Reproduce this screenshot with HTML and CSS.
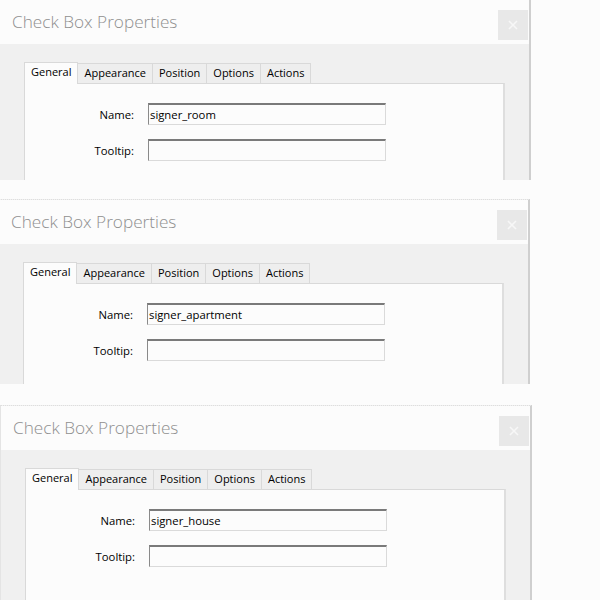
FILE: index.html
```html
<!DOCTYPE html>
<html lang="en">
<head>
<meta charset="utf-8">
<title>Check Box Properties</title>
<link rel="stylesheet" href="styles.css">
</head>
<body>
<div class="shot shot-1">
  <section class="dialog">
    <header class="titlebar">
      <h1 class="title">Check Box Properties</h1>
      <button class="close" aria-label="Close"><svg width="10" height="10" viewBox="0 0 10 10"><path d="M1 1L9 9M9 1L1 9" stroke="#f7f7f7" stroke-width="1.6"/></svg></button>
    </header>
    <div class="dlg-body">
      <nav class="tabs">
        <span class="tab active">General</span><span class="tab">Appearance</span><span class="tab">Position</span><span class="tab">Options</span><span class="tab">Actions</span>
      </nav>
      <div class="tab-panel">
        <div class="form">
          <label class="lbl">Name:</label><div class="field">signer_room</div>
          <label class="lbl">Tooltip:</label><div class="field"></div>
        </div>
      </div>
    </div>
  </section>
</div>
<div class="shot shot-2">
  <section class="dialog">
    <header class="titlebar">
      <h1 class="title">Check Box Properties</h1>
      <button class="close" aria-label="Close"><svg width="10" height="10" viewBox="0 0 10 10"><path d="M1 1L9 9M9 1L1 9" stroke="#f7f7f7" stroke-width="1.6"/></svg></button>
    </header>
    <div class="dlg-body">
      <nav class="tabs">
        <span class="tab active">General</span><span class="tab">Appearance</span><span class="tab">Position</span><span class="tab">Options</span><span class="tab">Actions</span>
      </nav>
      <div class="tab-panel">
        <div class="form">
          <label class="lbl">Name:</label><div class="field">signer_apartment</div>
          <label class="lbl">Tooltip:</label><div class="field"></div>
        </div>
      </div>
    </div>
  </section>
</div>
<div class="shot shot-3">
  <section class="dialog">
    <header class="titlebar">
      <h1 class="title">Check Box Properties</h1>
      <button class="close" aria-label="Close"><svg width="10" height="10" viewBox="0 0 10 10"><path d="M1 1L9 9M9 1L1 9" stroke="#f7f7f7" stroke-width="1.6"/></svg></button>
    </header>
    <div class="dlg-body">
      <nav class="tabs">
        <span class="tab active">General</span><span class="tab">Appearance</span><span class="tab">Position</span><span class="tab">Options</span><span class="tab">Actions</span>
      </nav>
      <div class="tab-panel">
        <div class="form">
          <label class="lbl">Name:</label><div class="field">signer_house</div>
          <label class="lbl">Tooltip:</label><div class="field"></div>
        </div>
      </div>
    </div>
  </section>
</div>
</body>
</html>
```
FILE: styles.css
```css
html, body {
  margin: 0;
  padding: 0;
  background: #fcfcfc;
}
body {
  font-family: "Open Sans", "Noto Sans", sans-serif;
  color: #000;
}
.shot {
  width: 600px;
  overflow: hidden;
}
.shot-1 { height: 180px; }
.shot-1 .dialog { margin: -1px 0 0 -1px; }
.shot-2 { margin-top: 19px; height: 185px; }
.shot-2 .dialog { margin-left: -2px; }
.shot-3 { margin-top: 21px; height: 195px; }

.dialog {
  width: 532px;
  box-sizing: border-box;
  border-top: 1px dotted #dedede;
  border-left: 1px solid #e4e4e4;
  border-right: 2px solid #cfcfcf;
  background: #f0f0f0;
}
.titlebar {
  height: 44px;
  background: #fcfcfc;
  display: flex;
  justify-content: space-between;
  align-items: flex-start;
}
.title {
  margin: 10px 0 0 12px;
  font-weight: 300;
  font-size: 17.2px;
  line-height: 24px;
  color: #8f8f8f;
}
.close {
  width: 30px;
  height: 30px;
  margin: 10px 1px 0 0;
  padding: 0;
  border: 0;
  background: #e8e8e8;
  display: flex;
  align-items: center;
  justify-content: center;
}
.dlg-body {
  padding: 18px 24px 0;
}
.tabs {
  display: flex;
  align-items: flex-end;
  height: 21px;
}
.tab {
  height: 20px;
  box-sizing: border-box;
  border: 1px solid #d9d9d9;
  border-left: 0;
  border-bottom: 0;
  padding: 0 6px;
  font-size: 11px;
  line-height: 18px;
  background: #eeeeee;
  white-space: nowrap;
}
.tab.active {
  height: 22px;
  margin-bottom: -1px;
  border-left: 1px solid #d9d9d9;
  padding: 0 6px;
  background: #fcfcfc;
  position: relative;
  z-index: 1;
}
.tab-panel {
  height: 200px;
  box-sizing: border-box;
  background: #fcfcfc;
  border: 1px solid #d9d9d9;
  border-right: 2px solid #dedede;
}
.form {
  display: grid;
  grid-template-columns: 109px 238px;
  column-gap: 14px;
  row-gap: 14px;
  padding-top: 19px;
  align-items: center;
}
.lbl {
  text-align: right;
  font-size: 11.3px;
}
.field {
  height: 22px;
  box-sizing: border-box;
  border: 1px solid #dadada;
  border-top: 2px solid #7a7a7a;
  border-left: 1px solid #8a8a8a;
  background: #fcfcfc;
  font-size: 11.3px;
  line-height: 19px;
  padding-left: 1px;
}
```
